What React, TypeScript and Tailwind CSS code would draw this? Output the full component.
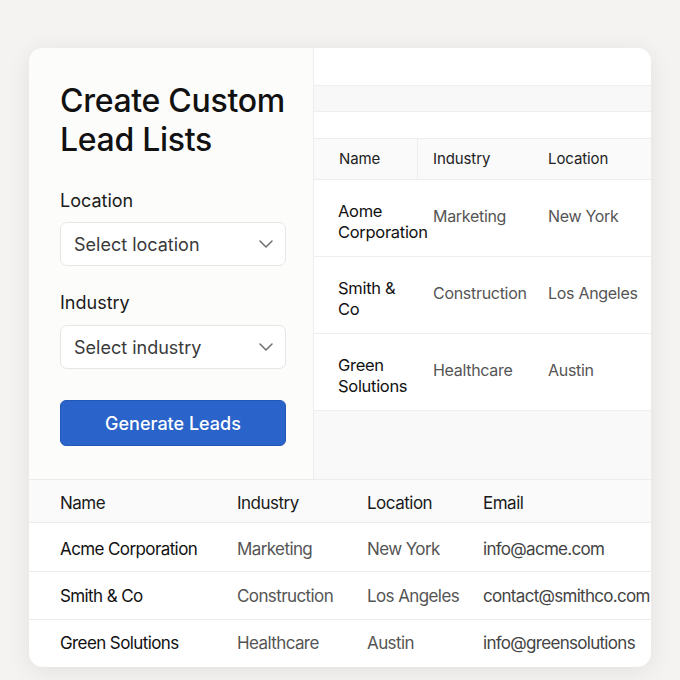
import React from "react";

const Chevron = () => (
  <svg width="14" height="8" viewBox="0 0 14 8" fill="none">
    <path d="M1 1L7 7L13 1" stroke="#6f6f6f" strokeWidth="1.5" strokeLinecap="round" strokeLinejoin="round" />
  </svg>
);

const Select = ({ label }: { label: string }) => (
  <div className="h-[44px] w-full rounded-[7px] border border-[#e6e6e4] bg-white flex items-center justify-between pl-[13px] pr-[12px]">
    <span className="text-[18px] text-[#3a3a3a]">{label}</span>
    <Chevron />
  </div>
);

const rightRows = [
  ["Aome Corporation", "Marketing", "New York"],
  ["Smith & Co", "Construction", "Los Angeles"],
  ["Green Solutions", "Healthcare", "Austin"],
];

const bottomRows = [
  ["Acme Corporation", "Marketing", "New York", "info@acme.com"],
  ["Smith & Co", "Construction", "Los Angeles", "contact@smithco.com"],
  ["Green Solutions", "Healthcare", "Austin", "info@greensolutions"],
];

const rowH = ["h-[49px] pt-[5px]", "h-[48px] pt-[3px]", "h-[47px] pt-[1px]"];

export default function App() {
  return (
    <div
      className="w-[680px] h-[680px] bg-[#f4f3f1] pt-[48px] pl-[29px]"
      style={{ fontFamily: "Inter, 'Noto Sans', sans-serif" }}
    >
      <div className="w-[622px] h-[619px] rounded-[14px] bg-white overflow-hidden flex flex-col shadow-[0_4px_24px_rgba(0,0,0,0.08)]">
        <div className="flex h-[432px]">
          {/* left panel */}
          <div className="w-[285px] shrink-0 bg-[#fcfcfb] border-r border-[#ededeb] pl-[31px] pr-[27px] pt-[33px] flex flex-col">
            <h1 className="text-[32px] leading-[39px] font-medium text-[#111] tracking-[-0.3px]">
              Create Custom
              <br />
              Lead Lists
            </h1>
            <div className="mt-[30px] text-[18px] leading-[24px] text-[#1a1a1a]">Location</div>
            <div className="mt-[9px]">
              <Select label="Select location" />
            </div>
            <div className="mt-[25px] text-[18px] leading-[24px] text-[#1a1a1a]">Industry</div>
            <div className="mt-[10px]">
              <Select label="Select industry" />
            </div>
            <button className="mt-[31px] h-[46px] w-full rounded-[6px] bg-[#2a63c9] border border-[#2358b8] text-white text-[18px] font-medium">
              Generate Leads
            </button>
          </div>
          {/* right panel */}
          <div className="flex-1 flex flex-col bg-white">
            <div className="h-[37px]" />
            <div className="h-[27px] bg-[#f8f8f8] border-y border-[#efefef]" />
            <div className="h-[26px]" />
            <div className="h-[42px] bg-[#fafafa] border-y border-[#ededed] grid grid-cols-[104px_115px_1fr] items-center text-[15px] text-[#222] tracking-[-0.1px]">
              <div className="pl-[25px] h-full flex items-center border-r border-[#ededed]">Name</div>
              <div className="pl-[15px]">Industry</div>
              <div className="pl-[15px]">Location</div>
            </div>
            {rightRows.map((r, i) => (
              <div
                key={i}
                className="h-[77px] border-b border-[#eeeeee] grid grid-cols-[104px_115px_1fr] items-center text-[16px] leading-[21px] tracking-[-0.3px]"
              >
                <div className="pl-[24px] text-[#111] pr-[6px] mt-[8px] text-[16.5px]">{r[0]}</div>
                <div className="pl-[15px] text-[#555] -mt-[4px]">{r[1]}</div>
                <div className="pl-[15px] text-[#555] -mt-[4px]">{r[2]}</div>
              </div>
            ))}
            <div className="flex-1 bg-[#f9f9f9]" />
          </div>
        </div>
        {/* bottom table */}
        <div className="flex-1 flex flex-col border-t border-[#ececec]">
          <div className="h-[43px] pt-[6px] bg-[#fafafa] border-b border-[#ececec] grid grid-cols-[177px_130px_116px_1fr] pl-[31px] items-center text-[17px] text-[#1a1a1a] whitespace-nowrap tracking-[-0.5px]">
            <div>Name</div>
            <div>Industry</div>
            <div>Location</div>
            <div>Email</div>
          </div>
          {bottomRows.map((r, i) => (
            <div
              key={i}
              className={`${rowH[i]} grid grid-cols-[177px_130px_116px_1fr] pl-[31px] items-center text-[17px] whitespace-nowrap tracking-[-0.6px] ${
                i < 2 ? "border-b border-[#ececec]" : ""
              }`}
            >
              <div className="text-[#111]">{r[0]}</div>
              <div className="text-[#555]">{r[1]}</div>
              <div className="text-[#555]">{r[2]}</div>
              <div className="text-[#444] tracking-[-0.7px]">{r[3]}</div>
            </div>
          ))}
        </div>
      </div>
    </div>
  );
}
